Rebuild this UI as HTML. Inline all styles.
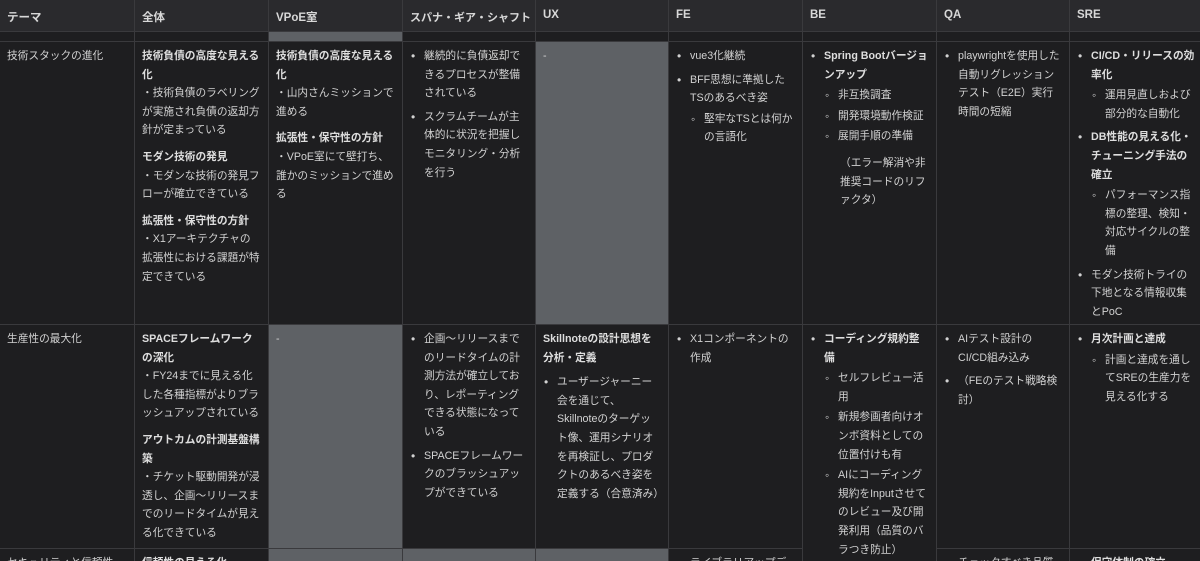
<!DOCTYPE html>
<html><head><meta charset="utf-8"><style>
*{margin:0;padding:0;box-sizing:border-box}
html{width:1200px;height:561px;overflow:hidden}
body{width:1200px;height:561px;overflow:hidden;background:#1e1e20;font-family:"Liberation Sans","Noto Sans CJK JP",sans-serif;font-size:10.7px;color:#d2d2d2;position:relative}
.h{position:absolute;top:0;height:32px;background:#2a2a2d;border-right:1px solid #3a3a3d;border-bottom:1px solid #3a3a3d;font-weight:bold;padding:9px 7px;color:#d8d8d8;font-size:11.5px;white-space:nowrap;overflow:hidden}
.c{position:absolute;border-right:1px solid #3a3a3d;border-bottom:1px solid #3a3a3d;padding:5px 7px;line-height:18.6px;overflow:hidden}
.g{background:#5e6165}
b{color:#dedede}
.s{margin-top:8px}
ul{list-style:none;margin-left:0}
li{position:relative;padding-left:14px;margin-bottom:5px}
li:before{content:"•";position:absolute;left:1px;top:0;font-size:12px}
li li{margin-bottom:2px}
li li:before{content:"◦";left:1px}
ul ul{margin-top:2px}
</style></head><body>
<div class="h" style="left:0;width:135px">テーマ</div>
<div class="h" style="left:135px;width:134px">全体</div>
<div class="h" style="left:269px;width:134px">VPoE室</div>
<div class="h" style="left:403px;width:133px;font-size:11px">スパナ・ギア・シャフト</div>
<div class="h" style="left:536px;width:133px">UX</div>
<div class="h" style="left:669px;width:134px">FE</div>
<div class="h" style="left:803px;width:134px">BE</div>
<div class="h" style="left:937px;width:133px">QA</div>
<div class="h" style="left:1070px;width:134px">SRE</div>
<div class="c" style="left:0;top:32px;width:135px;height:10px;padding:0"></div>
<div class="c" style="left:135px;top:32px;width:134px;height:10px;padding:0"></div>
<div class="c g" style="left:269px;top:32px;width:134px;height:10px;padding:0"></div>
<div class="c" style="left:403px;top:32px;width:133px;height:10px;padding:0"></div>
<div class="c" style="left:536px;top:32px;width:133px;height:10px;padding:0"></div>
<div class="c" style="left:669px;top:32px;width:134px;height:10px;padding:0"></div>
<div class="c" style="left:803px;top:32px;width:134px;height:10px;padding:0"></div>
<div class="c" style="left:937px;top:32px;width:133px;height:10px;padding:0"></div>
<div class="c" style="left:1070px;top:32px;width:134px;height:10px;padding:0"></div>
<div class="c" style="left:0;top:42px;width:135px;height:283px">技術スタックの進化</div>
<div class="c" style="left:135px;top:42px;width:134px;height:283px"><b>技術負債の高度な見える化</b><br>・技術負債のラベリングが実施され負債の返却方針が定まっている<div class="s"><b>モダン技術の発見</b><br>・モダンな技術の発見フローが確立できている</div><div class="s"><b>拡張性・保守性の方針</b><br>・X1アーキテクチャの拡張性における課題が特定できている</div></div>
<div class="c" style="left:269px;top:42px;width:134px;height:283px"><b>技術負債の高度な見える化</b><br>・山内さんミッションで進める<div class="s"><b>拡張性・保守性の方針</b><br>・VPoE室にて壁打ち、誰かのミッションで進める</div></div>
<div class="c" style="left:403px;top:42px;width:133px;height:283px"><ul><li>継続的に負債返却できるプロセスが整備されている</li><li>スクラムチームが主体的に状況を把握しモニタリング・分析を行う</li></ul></div>
<div class="c g" style="left:536px;top:42px;width:133px;height:283px">-</div>
<div class="c" style="left:669px;top:42px;width:134px;height:283px"><ul><li>vue3化継続</li><li>BFF思想に準拠したTSのあるべき姿<ul><li>堅牢なTSとは何かの言語化</li></ul></li></ul></div>
<div class="c" style="left:803px;top:42px;width:134px;height:283px"><ul><li><b>Spring Bootバージョンアップ</b><ul><li>非互換調査</li><li>開発環境動作検証</li><li>展開手順の準備</li></ul><div style="padding-left:16px;margin-top:8px">（エラー解消や非推奨コードのリファクタ）</div></li></ul></div>
<div class="c" style="left:937px;top:42px;width:133px;height:283px"><ul><li>playwrightを使用した自動リグレッションテスト（E2E）実行時間の短縮</li></ul></div>
<div class="c" style="left:1070px;top:42px;width:134px;height:283px"><ul><li><b>CI/CD・リリースの効率化</b><ul><li>運用見直しおよび部分的な自動化</li></ul></li><li><b>DB性能の見える化・チューニング手法の確立</b><ul><li>パフォーマンス指標の整理、検知・対応サイクルの整備</li></ul></li><li>モダン技術トライの下地となる情報収集とPoC</li></ul></div>
<div class="c" style="left:0;top:325px;width:135px;height:224px">生産性の最大化</div>
<div class="c" style="left:135px;top:325px;width:134px;height:224px"><b>SPACEフレームワークの深化</b><br>・FY24までに見える化した各種指標がよりブラッシュアップされている<div class="s"><b>アウトカムの計測基盤構築</b><br>・チケット駆動開発が浸透し、企画〜リリースまでのリードタイムが見える化できている</div></div>
<div class="c g" style="left:269px;top:325px;width:134px;height:224px">-</div>
<div class="c" style="left:403px;top:325px;width:133px;height:224px"><ul><li>企画〜リリースまでのリードタイムの計測方法が確立しており、レポーティングできる状態になっている</li><li>SPACEフレームワークのブラッシュアップができている</li></ul></div>
<div class="c" style="left:536px;top:325px;width:133px;height:224px"><b>Skillnoteの設計思想を分析・定義</b><ul style="margin-top:6px"><li>ユーザージャーニー会を通じて、<br>Skillnoteのターゲット像、運用シナリオを再検証し、プロダクトのあるべき姿を定義する（合意済み）</li></ul></div>
<div class="c" style="left:669px;top:325px;width:134px;height:224px"><ul><li>X1コンポーネントの作成</li></ul></div>
<div class="c" style="left:803px;top:325px;width:134px;height:260px"><ul><li><b>コーディング規約整備</b><ul><li>セルフレビュー活用</li><li>新規参画者向けオンボ資料としての位置付けも有</li><li>AIにコーディング規約をInputさせてのレビュー及び開発利用（品質のバラつき防止）</li></ul></li></ul></div>
<div class="c" style="left:937px;top:325px;width:133px;height:224px"><ul><li>AIテスト設計の<br>CI/CD組み込み</li><li>（FEのテスト戦略検討）</li></ul></div>
<div class="c" style="left:1070px;top:325px;width:134px;height:224px"><ul><li><b>月次計画と達成</b><ul><li>計画と達成を通してSREの生産力を見える化する</li></ul></li></ul></div>
<div class="c" style="left:0;top:549px;width:135px;height:40px">セキュリティと信頼性</div>
<div class="c" style="left:135px;top:549px;width:134px;height:40px"><b>信頼性の見える化</b></div>
<div class="c g" style="left:269px;top:549px;width:134px;height:40px"></div>
<div class="c g" style="left:403px;top:549px;width:133px;height:40px"></div>
<div class="c g" style="left:536px;top:549px;width:133px;height:40px"></div>
<div class="c" style="left:669px;top:549px;width:134px;height:40px"><ul><li>ライブラリアップデ</li></ul></div>
<div class="c" style="left:937px;top:549px;width:133px;height:40px"><ul><li>チェックすべき品質</li></ul></div>
<div class="c" style="left:1070px;top:549px;width:134px;height:40px"><ul><li><b>保守体制の確立</b></li></ul></div>
</body></html>
